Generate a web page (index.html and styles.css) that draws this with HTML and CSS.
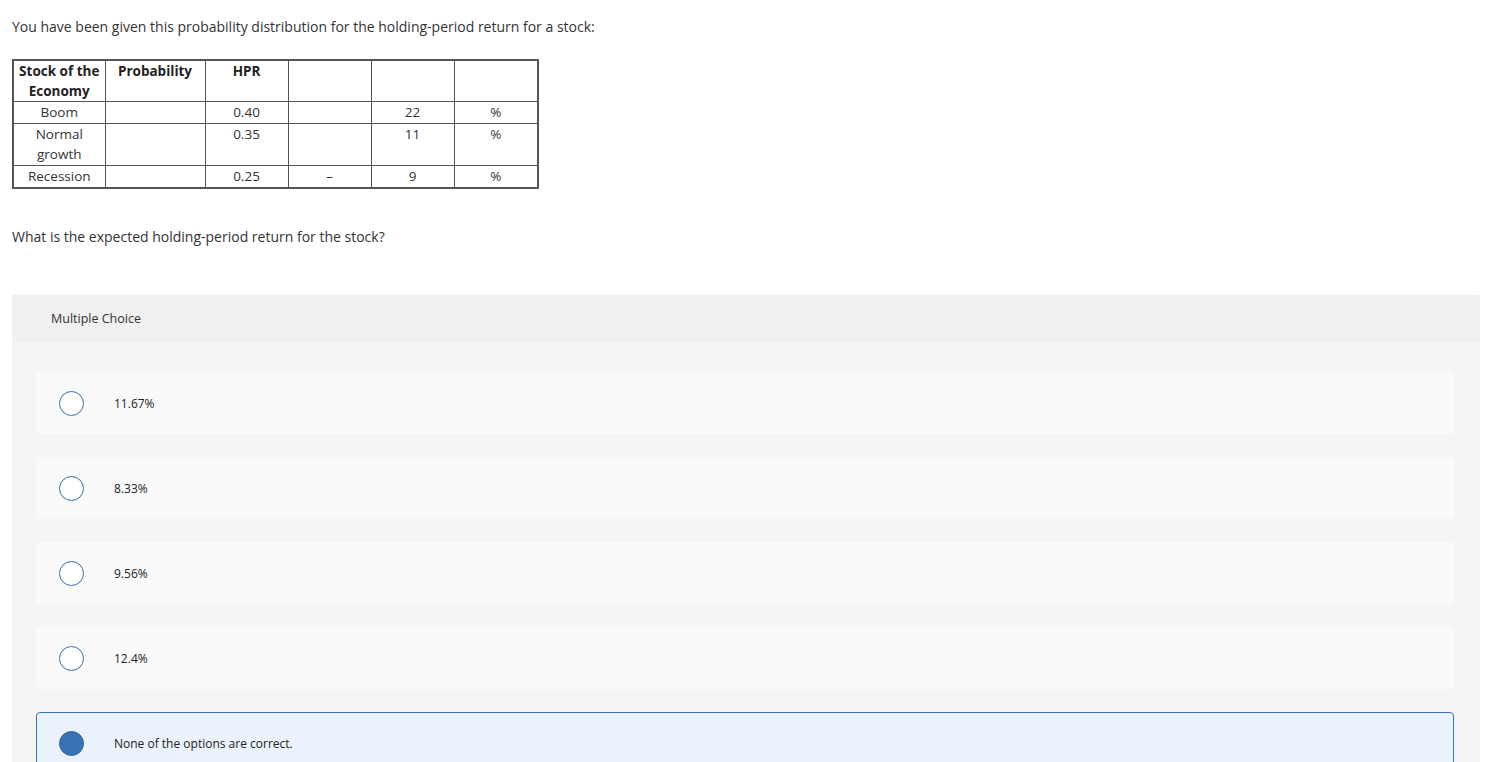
FILE: index.html
```html
<!DOCTYPE html>
<html>
<head>
<meta charset="utf-8">
<link rel="stylesheet" href="styles.css">
</head>
<body>
<div class="page">
  <p class="intro">You have been given this probability distribution for the holding-period return for a stock:</p>
  <table class="dist">
    <colgroup>
      <col class="c1"><col class="c2"><col class="c3"><col class="c4"><col class="c5"><col class="c6">
    </colgroup>
    <tr class="head">
      <td>Stock of the Economy</td>
      <td>Probability</td>
      <td>HPR</td>
      <td></td>
      <td></td>
      <td></td>
    </tr>
    <tr>
      <td>Boom</td><td></td><td>0.40</td><td></td><td>22</td><td>%</td>
    </tr>
    <tr>
      <td>Normal growth</td><td></td><td>0.35</td><td></td><td>11</td><td>%</td>
    </tr>
    <tr>
      <td>Recession</td><td></td><td>0.25</td><td>–</td><td>9</td><td>%</td>
    </tr>
  </table>
  <p class="question">What is the expected holding-period return for the stock?</p>
  <div class="mc">
    <div class="mc-head">Multiple Choice</div>
    <div class="mc-body">
      <div class="opt"><span class="radio"></span><span class="label">11.67%</span></div>
      <div class="opt"><span class="radio"></span><span class="label">8.33%</span></div>
      <div class="opt"><span class="radio"></span><span class="label">9.56%</span></div>
      <div class="opt"><span class="radio"></span><span class="label">12.4%</span></div>
      <div class="opt selected"><span class="radio"></span><span class="label">None of the options are correct.</span></div>
    </div>
  </div>
</div>
</body>
</html>
```
FILE: styles.css
```css
html, body {
  margin: 0;
  padding: 0;
  background: #fff;
}
body {
  font-family: "Open Sans", "Liberation Sans", sans-serif;
  color: #333;
  overflow: hidden;
}
.page {
  padding: 0 22px 0 12px;
}
.intro {
  margin: 0;
  padding-top: 17px;
  font-size: 14px;
  line-height: 20px;
}
.dist {
  margin-top: 22px;
  border-collapse: collapse;
  table-layout: fixed;
  width: 525px;
  border: 2px solid #555;
  font-size: 13.5px;
  line-height: 20px;
  color: #333;
}
.dist td {
  border: 1px solid #555;
  padding: 0 4px 1px;
  text-align: center;
  vertical-align: top;
}
.dist .head td {
  font-weight: bold;
  color: #222;
  padding: 0 2px;
}
.dist .c1 { width: 92px; }
.dist .c2 { width: 100px; }
.dist .c3 { width: 83px; }
.dist .c4 { width: 83px; }
.dist .c5 { width: 83px; }
.dist .c6 { width: 84px; }
.question {
  margin: 0;
  padding-top: 38px;
  font-size: 14px;
  line-height: 20px;
}
.mc {
  margin-top: 48px;
  background: #f5f5f5;
  border-radius: 0 4px 0 0;
}
.mc-head {
  height: 47px;
  background: #f0f0f0;
  border-radius: 0 4px 0 0;
  padding-left: 39px;
  font-size: 12.5px;
  line-height: 47px;
}
.mc-body {
  padding: 30px 26px 0 24px;
  display: flex;
  flex-direction: column;
  gap: 23px;
}
.opt {
  height: 62px;
  background: #fafafa;
  border-radius: 4px;
  display: flex;
  align-items: center;
  padding-left: 23px;
  box-sizing: border-box;
}
.radio {
  width: 23px;
  height: 23px;
  border: 1.5px solid #3b6ea5;
  border-radius: 50%;
  background: #fff;
  flex: none;
}
.label {
  margin-left: 30px;
  font-size: 12px;
  color: #222;
}
.opt.selected {
  background: #eaf2fb;
  border: 1px solid #3a73b5;
  padding-left: 22px;
}
.opt.selected .radio {
  background: #3a73b5;
  border-color: #2f639c;
}
```
